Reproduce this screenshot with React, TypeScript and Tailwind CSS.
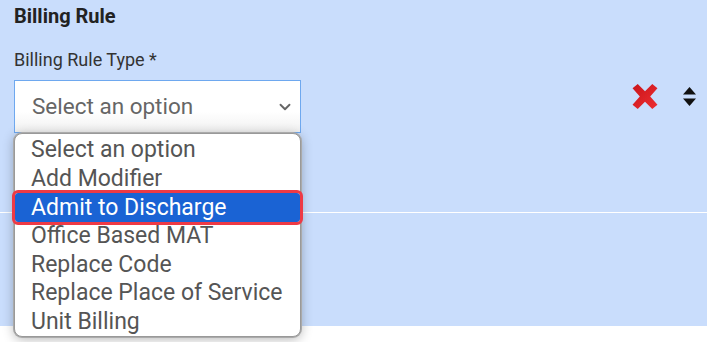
import { ChevronDown } from 'lucide-react'

const options = [
  'Select an option',
  'Add Modifier',
  'Admit to Discharge',
  'Office Based MAT',
  'Replace Code',
  'Replace Place of Service',
  'Unit Billing',
]

function RemoveIcon() {
  return (
    <svg width="30" height="27" viewBox="1 1 28 26">
      <defs>
        <linearGradient id="xg" x1="0" y1="0" x2="1" y2="1">
          <stop offset="0" stopColor="#c9141a" />
          <stop offset="1" stopColor="#ee2e32" />
        </linearGradient>
      </defs>
      <path
        d="M3 6 L8 2 L15 9 L22 2 L27 6 L20 14 L27 22 L22 26 L15 19 L8 26 L3 22 L10 14 Z"
        fill="url(#xg)"
      />
    </svg>
  )
}

function SortIcon() {
  return (
    <svg width="15" height="21" viewBox="0 0 15 21">
      <path d="M7.5 1 L14 8.5 L1 8.5 Z" fill="#111" />
      <path d="M1 12.5 L14 12.5 L7.5 20 Z" fill="#111" />
    </svg>
  )
}

export default function App() {
  return (
    <div className="h-[342px] w-[707px] overflow-hidden bg-white font-['Roboto',sans-serif]">
      <div className="relative h-[326px] bg-[#c9ddfc]">
        <div className="px-[14px] pt-[4px]">
          <h2 className="text-[20px] font-bold leading-[24px] text-[#222]">Billing Rule</h2>
          <div className="mt-[21px] text-[18px] leading-[22px] text-[#333]">Billing Rule Type *</div>
        </div>
        <div className="flex h-[142px] items-start border-b border-white pl-[14px] pt-[9px]">
          <div className="relative w-[287px]">
            <div className="flex h-[53px] items-center justify-between border border-[#6ea8ef] bg-gradient-to-b from-white from-60% to-[#f1f1f1] pl-[17px] pr-[6px]">
              <span className="text-[22.5px] text-[#666]">Select an option</span>
              <ChevronDown className="h-[18px] w-[18px] text-[#666]" strokeWidth={2.5} />
            </div>
            <ul className="absolute left-0 top-[53px] z-10 w-[287px] rounded-[8px] border border-[#999] bg-white pt-[2px] shadow-[0_2px_12px_rgba(0,0,0,0.3)] ring-1 ring-[#aaa]">
              {options.map((o) =>
                o === 'Admit to Discharge' ? (
                  <li
                    key={o}
                    className="relative z-10 rounded-[3px] bg-[#1a63d4] pl-[16px] text-[23px] leading-[29px] text-white outline-[3px] outline-[#ee3a45]"
                  >
                    {o}
                  </li>
                ) : (
                  <li key={o} className="pl-[16px] text-[23px] leading-[28.5px] text-[#555]">
                    {o}
                  </li>
                ),
              )}
            </ul>
          </div>
          <div className="ml-auto flex items-center gap-[22px] pr-[10px] pt-[3px]">
            <RemoveIcon />
            <SortIcon />
          </div>
        </div>
      </div>
    </div>
  )
}
